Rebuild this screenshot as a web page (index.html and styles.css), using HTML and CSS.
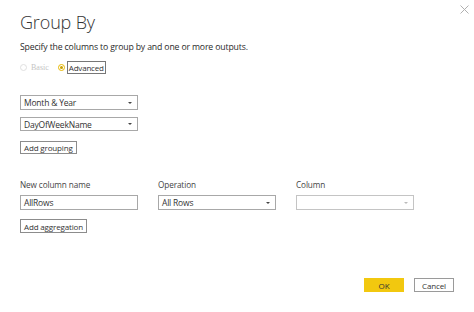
FILE: index.html
```html
<!DOCTYPE html>
<html>
<head>
<meta charset="utf-8">
<link rel="stylesheet" href="styles.css">
</head>
<body>
<div class="dialog">
  <div class="header">
    <h1 class="title">Group By</h1>
    <span class="close" aria-label="Close">
      <svg width="9" height="9" viewBox="0 0 9 9"><path d="M0.5 0.5 L8.5 8.5 M8.5 0.5 L0.5 8.5" stroke="#b0b0b0" stroke-width="1" fill="none"/></svg>
    </span>
  </div>
  <p class="subtitle">Specify the columns to group by and one or more outputs.</p>
  <div class="radios">
    <label class="radio disabled"><span class="dot"></span><span class="basic">Basic</span></label>
    <label class="radio checked"><span class="dot"><span class="inner"></span></span><span class="focus">Advanced</span></label>
  </div>
  <div class="groupings">
    <div class="select first"><span>Month &amp; Year</span><span class="caret"></span></div>
    <div class="select"><span>DayOfWeekName</span><span class="caret"></span></div>
    <button class="btn">Add grouping</button>
  </div>
  <div class="agg">
    <div class="cols">
      <div class="col">
        <div class="label">New column name</div>
        <div class="input">AllRows</div>
      </div>
      <div class="col">
        <div class="label">Operation</div>
        <div class="select"><span>All Rows</span><span class="caret"></span></div>
      </div>
      <div class="col">
        <div class="label">Column</div>
        <div class="select empty"><span></span><span class="caret light"></span></div>
      </div>
    </div>
    <button class="btn">Add aggregation</button>
  </div>
  <div class="footer">
    <button class="btn ok">OK</button>
    <button class="btn cancel">Cancel</button>
  </div>
</div>
</body>
</html>
```

FILE: styles.css
```css
html, body {
  margin: 0;
  padding: 0;
  background: #fff;
}
body {
  width: 474px;
  height: 312px;
  overflow: hidden;
  font-family: "Open Sans", "Noto Sans", sans-serif;
  color: #333;
}
.dialog {
  padding: 10px 5px 0 20px;
  display: flex;
  flex-direction: column;
}
.header {
  display: flex;
  justify-content: space-between;
  align-items: flex-start;
  height: 24px;
}
.title {
  margin: 0;
  font-size: 18px;
  font-weight: 300;
  line-height: 24px;
  color: #333;
  letter-spacing: -0.15px;
}
.close {
  display: flex;
  margin-top: -5px;
}
.subtitle {
  margin: 6px 0 0 0;
  font-size: 8.7px;
  letter-spacing: -0.15px;
  line-height: 14px;
  color: #2a2a2a;
}
.radios {
  display: flex;
  align-items: center;
  gap: 9px;
  margin-top: 7px;
  height: 13px;
}
.radio {
  display: flex;
  align-items: center;
  gap: 2px;
  font-size: 8px;
}
.dot {
  width: 5px;
  height: 5px;
  border: 1px solid #e0e0e0;
  border-radius: 50%;
  display: flex;
  align-items: center;
  justify-content: center;
  box-sizing: content-box;
}
.checked .dot {
  border-color: #e8b800;
}
.inner {
  width: 3px;
  height: 3px;
  border-radius: 50%;
  background: #c9a000;
}
.basic {
  font-family: "Liberation Serif", serif;
  color: #c4c4c4;
  font-size: 8px;
  margin-left: 2px;
}
.focus {
  border: 1px solid #777;
  padding: 0 1px;
  line-height: 11px;
  color: #333;
  letter-spacing: -0.2px;
}
.groupings {
  display: flex;
  flex-direction: column;
  align-items: flex-start;
  gap: 7px;
  margin-top: 21px;
}
.select, .input {
  box-sizing: border-box;
  width: 118px;
  height: 15px;
  border: 1px solid #a8a8a8;
  display: flex;
  align-items: center;
  justify-content: space-between;
  padding: 0 5px 0 3px;
  font-size: 8.5px;
  letter-spacing: -0.2px;
  color: #333;
  background: #fff;
}
.groupings .select + .select {
  height: 14px;
}
.caret {
  width: 0;
  height: 0;
  border-left: 2px solid transparent;
  border-right: 2px solid transparent;
  border-top: 2px solid #444;
}
.caret.light {
  border-top-color: #bbb;
}
.select.empty {
  border-color: #c4c4c4;
}
.btn {
  box-sizing: border-box;
  height: 13px;
  border: 1px solid #8c8c8c;
  background: #fff;
  font-family: "Open Sans", "Noto Sans", sans-serif;
  font-size: 8px;
  letter-spacing: -0.15px;
  color: #333;
  padding: 0 3px;
  line-height: 11px;
  margin: 0;
}
.groupings .btn {
  margin-top: 3px;
}
.agg {
  display: flex;
  flex-direction: column;
  align-items: flex-start;
  margin-top: 25px;
  gap: 9px;
}
.cols {
  display: flex;
  gap: 20px;
}
.col {
  display: flex;
  flex-direction: column;
  gap: 5px;
}
.label {
  font-size: 8.2px;
  letter-spacing: -0.1px;
  line-height: 11px;
  color: #444;
}
.agg .btn {
  height: 14px;
}
.footer {
  display: flex;
  justify-content: flex-end;
  gap: 10px;
  margin-top: 45px;
  padding-right: 15px;
}
.ok {
  width: 40px;
  height: 14px;
  background: #f2c80f;
  border-color: #f2c80f;
}
.cancel {
  width: 40px;
  height: 14px;
  border-color: #9a9a9a;
}
```
